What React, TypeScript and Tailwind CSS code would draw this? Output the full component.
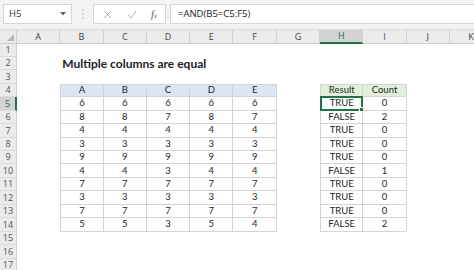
import React from "react";

const cols = ["A", "B", "C", "D", "E", "F", "G", "H", "I", "J", "K"];

const data: [number[], string, number][] = [
  [[6, 6, 6, 6, 6], "TRUE", 0],
  [[8, 8, 7, 8, 7], "FALSE", 2],
  [[4, 4, 4, 4, 4], "TRUE", 0],
  [[3, 3, 3, 3, 3], "TRUE", 0],
  [[9, 9, 9, 9, 9], "TRUE", 0],
  [[4, 4, 3, 4, 4], "FALSE", 1],
  [[7, 7, 7, 7, 7], "TRUE", 0],
  [[3, 3, 3, 3, 3], "TRUE", 0],
  [[7, 7, 7, 7, 7], "TRUE", 0],
  [[5, 5, 3, 5, 4], "FALSE", 2],
];

const Cell: React.FC<{ r: number; c: number }> = ({ r, c }) => {
  // c: 0 = A ... 10 = K
  if (r === 2 && c === 1) {
    return (
      <div className="relative">
        <span className="absolute left-[2px] top-0 whitespace-nowrap font-bold text-[12px] leading-[13.45px] text-[#222]">
          Multiple columns are equal
        </span>
      </div>
    );
  }
  const inTable = r >= 4 && r <= 14 && c >= 1 && c <= 5;
  const inResult = r >= 4 && r <= 14 && (c === 7 || c === 8);
  if (!inTable && !inResult) return <div />;

  let text: string | number = "";
  let bg = "bg-white";
  if (r === 4) {
    text = inTable ? cols[c - 1] : c === 7 ? "Result" : "Count";
    bg = inTable ? "bg-[#dce6f2]" : "bg-[#e2efda]";
  } else {
    const row = data[r - 5];
    text = inTable ? row[0][c - 1] : c === 7 ? row[1] : row[2];
  }
  const left = c === 1 || c === 7 ? "border-l" : "";
  const top = r === 4 ? "border-t" : "";
  return (
    <div
      className={`relative flex items-center justify-center border-r border-b border-[#d4d4d4] ${left} ${top} ${bg} text-[9.5px] text-[#262626]`}
    >
      {text}
      {r === 5 && c === 7 && (
        <div className="absolute -inset-px border-2 border-[#217346]">
          <div className="absolute -right-[3px] -bottom-[3px] w-[5px] h-[5px] bg-[#217346] border border-white" />
        </div>
      )}
    </div>
  );
};

export default function App() {
  const rows = Array.from({ length: 17 }, (_, i) => i + 1);
  return (
    <div className="w-[474px] h-[270px] overflow-hidden bg-white" style={{ fontFamily: "Lato, 'Open Sans', sans-serif" }}>
      {/* formula bar */}
      <div className="h-[30px] bg-[#f3f3f3] border-b border-[#dcdcdc] flex items-start pt-[4px] pl-[3px] font-['Open_Sans',sans-serif]">
        <div className="w-[69px] h-[20px] bg-white border border-[#d6d6d6] flex items-center justify-between pl-[5px] pr-[5px]">
          <span className="text-[9.5px] text-[#333]">H5</span>
          <svg width="6" height="4" viewBox="0 0 6 4">
            <path d="M0 0 L6 0 L3 3.5 Z" fill="#666" />
          </svg>
        </div>
        <div className="w-[21px] h-[20px] flex items-center justify-center">
          <svg width="2" height="10" viewBox="0 0 2 10">
            <circle cx="1" cy="1" r="0.8" fill="#b5b5b5" />
            <circle cx="1" cy="5" r="0.8" fill="#b5b5b5" />
            <circle cx="1" cy="9" r="0.8" fill="#b5b5b5" />
          </svg>
        </div>
        <div className="w-[73px] h-[20px] bg-white border border-[#d6d6d6] flex items-center pl-[9px]">
          <svg width="9" height="9" viewBox="0 0 9 9">
            <path d="M1 1 L8 8 M8 1 L1 8" stroke="#b0b0b0" strokeWidth="1" />
          </svg>
          <svg width="10" height="9" viewBox="0 0 10 9" className="ml-[15px]">
            <path d="M1 5 L4 8 L9 1" stroke="#b0b0b0" strokeWidth="1" fill="none" />
          </svg>
          <span className="ml-[14px] italic text-[10px] text-[#555] font-['Liberation_Serif',serif]">
            f<span className="text-[7px]">x</span>
          </span>
        </div>
        <div className="flex-1 ml-[4px] h-[20px] bg-white border border-r-0 border-[#d6d6d6] flex items-center pl-[7px]">
          <span className="text-[9.5px] text-[#222]">=AND(B5=C5:F5)</span>
        </div>
      </div>

      {/* sheet */}
      <div className="grid grid-cols-[17px_repeat(11,43.3px)] grid-rows-[13.5px_repeat(17,13.45px)]">
        <div className="relative bg-[#ebebeb] border-r border-b border-[#cfcfcf]">
          <svg width="7" height="7" viewBox="0 0 7 7" className="absolute right-[2px] bottom-[2px]">
            <path d="M7 0 L7 7 L0 7 Z" fill="#b6b6b6" />
          </svg>
        </div>
        {cols.map((l, i) => (
          <div
            key={l}
            className={`flex items-center justify-center text-[9px] font-['Open_Sans',sans-serif] border-r border-[#d2d2d2] ${
              i === 7
                ? "bg-[#d3d3d3] text-[#1e6b41] border-b-2 border-b-[#217346]"
                : "bg-[#ebebeb] text-[#444] border-b border-b-[#cfcfcf]"
            }`}
          >
            {l}
          </div>
        ))}
        {rows.map(r => (
          <React.Fragment key={r}>
            <div
              className={`flex items-center justify-center text-[9px] font-['Open_Sans',sans-serif] border-b border-[#dadada] ${
                r === 5
                  ? "bg-[#d3d3d3] text-[#1e6b41] border-r-2 border-r-[#217346]"
                  : "bg-[#ebebeb] text-[#555] border-r border-r-[#cfcfcf]"
              }`}
            >
              {r}
            </div>
            {cols.map((_, c) => (
              <Cell key={c} r={r} c={c} />
            ))}
          </React.Fragment>
        ))}
      </div>
    </div>
  );
}
